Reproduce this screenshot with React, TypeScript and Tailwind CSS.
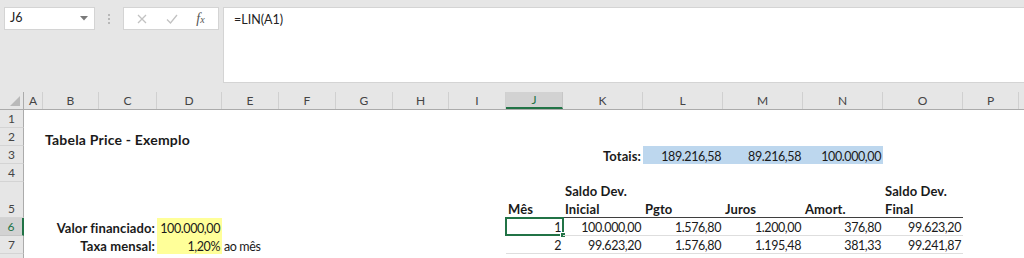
import React from 'react';

type Cell = {
    t?: string | string[];
    right?: boolean;
    bold?: boolean;
    title?: boolean;
    bg?: string;
    line?: string;
};

type Row = {
    n: string;
    tall?: boolean;
    active?: boolean;
    cells: Record<string, Cell>;
};

const COLS: { k: string; w: string }[] = [
    { k: 'A', w: 'w-[19px]' },
    { k: 'B', w: 'w-[56px]' },
    { k: 'C', w: 'w-[58px]' },
    { k: 'D', w: 'w-[65px]' },
    { k: 'E', w: 'w-[57px]' },
    { k: 'F', w: 'w-[57px]' },
    { k: 'G', w: 'w-[57px]' },
    { k: 'H', w: 'w-[56px]' },
    { k: 'I', w: 'w-[57px]' },
    { k: 'J', w: 'w-[57px]' },
    { k: 'K', w: 'w-[80px]' },
    { k: 'L', w: 'w-[80px]' },
    { k: 'M', w: 'w-[80px]' },
    { k: 'N', w: 'w-[80px]' },
    { k: 'O', w: 'w-[80px]' },
    { k: 'P', w: 'w-[56px]' },
];

const YELLOW = 'bg-[#ffff99]';
const BLUE = 'bg-[#bdd7ee]';
const HEAD_LINE = 'border-b border-[#3f3f3f]';
const SOFT_LINE = 'border-b border-[#dedede]';

const rows: Row[] = [
    { n: '1', cells: {} },
    { n: '2', cells: { B: { t: 'Tabela Price - Exemplo', bold: true, title: true } } },
    {
        n: '3',
        cells: {
            K: { t: 'Totais:', bold: true, right: true },
            L: { t: '189.216,58', right: true, bg: BLUE },
            M: { t: '89.216,58', right: true, bg: BLUE },
            N: { t: '100.000,00', right: true, bg: BLUE },
        },
    },
    { n: '4', cells: {} },
    {
        n: '5',
        tall: true,
        cells: {
            J: { t: 'Mês', bold: true, line: HEAD_LINE },
            K: { t: ['Saldo Dev.', 'Inicial'], bold: true, line: HEAD_LINE },
            L: { t: 'Pgto', bold: true, line: HEAD_LINE },
            M: { t: 'Juros', bold: true, line: HEAD_LINE },
            N: { t: 'Amort.', bold: true, line: HEAD_LINE },
            O: { t: ['Saldo Dev.', 'Final'], bold: true, line: HEAD_LINE },
        },
    },
    {
        n: '6',
        active: true,
        cells: {
            C: { t: 'Valor financiado:', bold: true, right: true },
            D: { t: '100.000,00', right: true, bg: YELLOW },
            J: { t: '1', right: true, line: SOFT_LINE },
            K: { t: '100.000,00', right: true, line: SOFT_LINE },
            L: { t: '1.576,80', right: true, line: SOFT_LINE },
            M: { t: '1.200,00', right: true, line: SOFT_LINE },
            N: { t: '376,80', right: true, line: SOFT_LINE },
            O: { t: '99.623,20', right: true, line: SOFT_LINE },
        },
    },
    {
        n: '7',
        cells: {
            C: { t: 'Taxa mensal:', bold: true, right: true },
            D: { t: '1,20%', right: true, bg: YELLOW },
            E: { t: 'ao mês' },
            J: { t: '2', right: true, line: SOFT_LINE },
            K: { t: '99.623,20', right: true, line: SOFT_LINE },
            L: { t: '1.576,80', right: true, line: SOFT_LINE },
            M: { t: '1.195,48', right: true, line: SOFT_LINE },
            N: { t: '381,33', right: true, line: SOFT_LINE },
            O: { t: '99.241,87', right: true, line: SOFT_LINE },
        },
    },
    { n: '', cells: {} },
];

const FormulaBar: React.FC = () => (
    <div className="h-[92px] flex items-start pt-[7px] pl-[4px]">
        {/* Name box */}
        <div className="w-[91px] h-[23px] bg-white border border-[#d4d4d4] flex items-center justify-between pl-[5px] pr-[6px] text-[12.5px] text-[#222]">
            <span>J6</span>
            <svg width="8" height="5" viewBox="0 0 8 5">
                <path d="M0 0h8L4 4.5z" fill="#7a7a7a" />
            </svg>
        </div>

        {/* grip */}
        <div className="w-[28px] h-[23px] flex flex-col items-center justify-center gap-[2px]">
            <span className="w-[2px] h-[2px] bg-[#b8b8b8]" />
            <span className="w-[2px] h-[2px] bg-[#b8b8b8]" />
            <span className="w-[2px] h-[2px] bg-[#b8b8b8]" />
        </div>

        {/* cancel / enter / fx */}
        <div className="w-[96px] h-[23px] bg-white border border-[#d4d4d4] flex items-center justify-around px-[4px]">
            <svg width="10" height="10" viewBox="0 0 10 10">
                <path d="M1 1l8 8M9 1L1 9" stroke="#c2c2c2" strokeWidth="1.3" />
            </svg>
            <svg width="12" height="10" viewBox="0 0 12 10">
                <path d="M1 5.5l3.5 3.5L11 1" stroke="#c2c2c2" strokeWidth="1.3" fill="none" />
            </svg>
            <span className="font-['Liberation_Serif',serif] italic text-[14px] text-[#555] leading-none">
                f<span className="text-[10px]">x</span>
            </span>
        </div>

        {/* formula input */}
        <div className="ml-[4px] flex-1 h-[76px] bg-white border border-[#d4d4d4] border-r-0 pl-[10px] pt-[3px] text-[12.5px] text-[#222]">
            =LIN(A1)
        </div>
    </div>
);

const ColumnHeader: React.FC = () => (
    <div className="flex h-[18px] bg-[#e6e6e6] border-b border-[#ababab]">
        <div className="w-[24px] shrink-0 h-full border-r border-[#ababab] flex items-end justify-end pr-[3px] pb-[3px]">
            <svg width="10" height="10" viewBox="0 0 10 10">
                <path d="M10 0V10H0z" fill="#b9b9b9" />
            </svg>
        </div>
        {COLS.map((c) =>
            c.k === 'J' ? (
                <div
                    key={c.k}
                    className={`${c.w} shrink-0 h-full flex items-center justify-center bg-[#d2d2d2] border-r border-[#c6c6c6] border-b-2 border-b-[#217346] text-[12px] text-[#217346]`}
                >
                    {c.k}
                </div>
            ) : (
                <div
                    key={c.k}
                    className={`${c.w} shrink-0 h-full flex items-center justify-center border-r border-[#d0d0d0] text-[12px] text-[#444]`}
                >
                    {c.k}
                </div>
            )
        )}
        <div className="flex-1" />
    </div>
);

const textClass = (cell: Cell) => {
    if (cell.title) return 'font-bold text-[14px] tracking-[0.2px]';
    if (cell.bold) return 'font-bold text-[13px] tracking-[0.1px]';
    return 'text-[12.5px] tracking-[-0.4px]';
};

const SheetRow: React.FC<{ row: Row }> = ({ row }) => {
    const h = row.tall ? 'h-[36px]' : 'h-[18px]';
    return (
        <div className={`flex ${h} bg-white`}>
            {row.active ? (
                <div className="w-[24px] shrink-0 h-full bg-[#d2d2d2] border-r-2 border-[#217346] border-b border-b-[#c6c6c6] flex items-end justify-center text-[12px] text-[#217346] leading-[17px]">
                    {row.n}
                </div>
            ) : (
                <div className="w-[24px] shrink-0 h-full bg-[#e6e6e6] border-r border-[#ababab] border-b border-b-[#d4d4d4] flex items-end justify-center text-[12px] text-[#444] leading-[17px]">
                    {row.n}
                </div>
            )}
            {COLS.map((c) => {
                const cell = row.cells[c.k];
                const selected = row.active && c.k === 'J';
                return (
                    <div
                        key={c.k}
                        className={`${c.w} shrink-0 h-full relative flex flex-col justify-end ${cell?.bg ?? ''} ${cell?.line ?? ''}`}
                    >
                        {cell?.t &&
                            (Array.isArray(cell.t) ? cell.t : [cell.t]).map((line) => (
                                <div
                                    key={line}
                                    className={`h-[18px] flex items-center whitespace-nowrap px-[2px] pt-[4px] text-[#1a1a1a] ${cell.right ? 'justify-end' : 'justify-start'} ${textClass(cell)}`}
                                >
                                    {line}
                                </div>
                            ))}
                        {selected && (
                            <div className="absolute -left-[1px] -top-[1px] -right-[1px] -bottom-[1px] border-2 border-[#217346]">
                                <span className="absolute -right-[4px] -bottom-[4px] w-[6px] h-[6px] bg-[#217346] border border-white" />
                            </div>
                        )}
                    </div>
                );
            })}
            <div className="flex-1" />
        </div>
    );
};

const App: React.FC = () => {
    return (
        <div className="w-[1024px] h-[258px] overflow-hidden bg-[#e6e6e6] font-['Lato',sans-serif]">
            <FormulaBar />
            <ColumnHeader />
            {rows.map((r, i) => (
                <SheetRow key={i} row={r} />
            ))}
        </div>
    );
};

export default App;
